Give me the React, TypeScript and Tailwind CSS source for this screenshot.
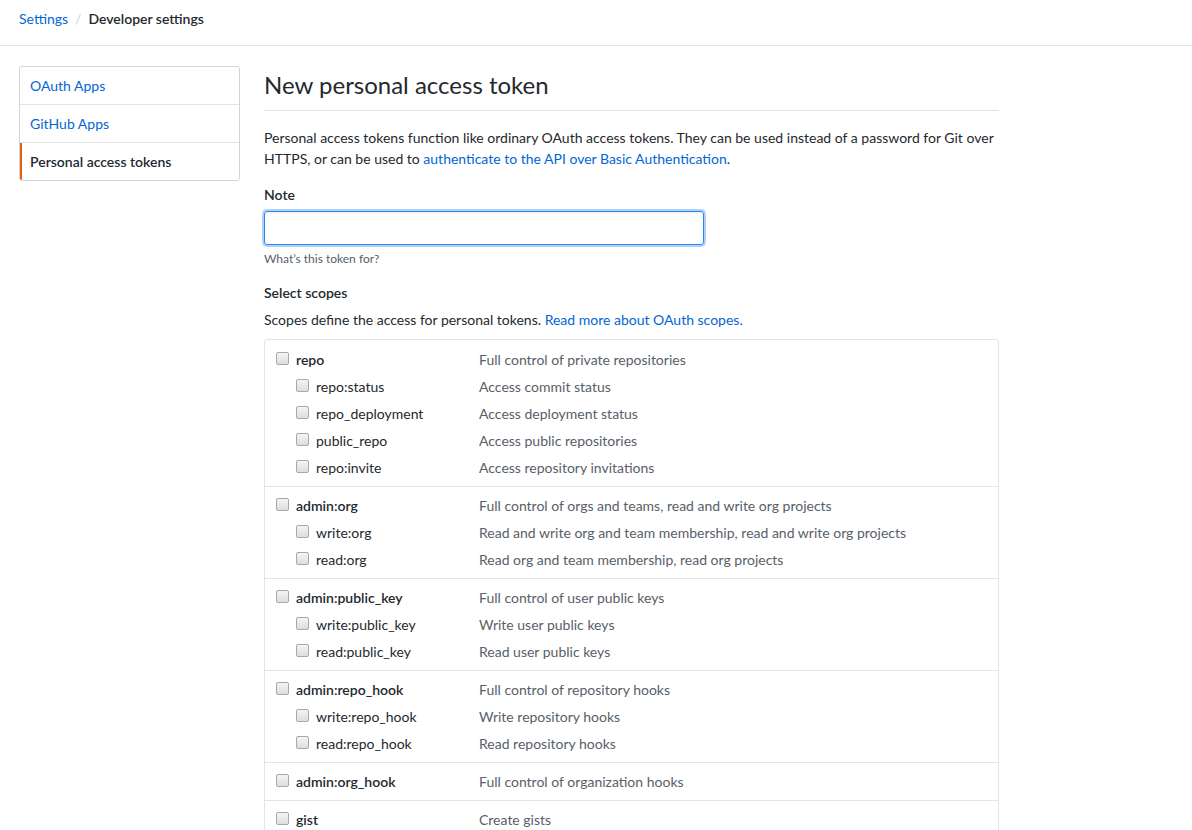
import React from "react";

const font = { fontFamily: '"Segoe UI", Lato, "Liberation Sans", sans-serif' };

function Box() {
  return (
    <span className="mt-[-3px] inline-block h-[13px] w-[13px] shrink-0 rounded-[2px] border border-[#a8a8a8] bg-gradient-to-b from-[#f4f4f4] to-[#dedede]" />
  );
}

type Scope = { name: string; desc: string; subs?: { name: string; desc: string }[] };

const scopes: Scope[] = [
  {
    name: "repo",
    desc: "Full control of private repositories",
    subs: [
      { name: "repo:status", desc: "Access commit status" },
      { name: "repo_deployment", desc: "Access deployment status" },
      { name: "public_repo", desc: "Access public repositories" },
      { name: "repo:invite", desc: "Access repository invitations" },
    ],
  },
  {
    name: "admin:org",
    desc: "Full control of orgs and teams, read and write org projects",
    subs: [
      { name: "write:org", desc: "Read and write org and team membership, read and write org projects" },
      { name: "read:org", desc: "Read org and team membership, read org projects" },
    ],
  },
  {
    name: "admin:public_key",
    desc: "Full control of user public keys",
    subs: [
      { name: "write:public_key", desc: "Write user public keys" },
      { name: "read:public_key", desc: "Read user public keys" },
    ],
  },
  {
    name: "admin:repo_hook",
    desc: "Full control of repository hooks",
    subs: [
      { name: "write:repo_hook", desc: "Write repository hooks" },
      { name: "read:repo_hook", desc: "Read repository hooks" },
    ],
  },
  { name: "admin:org_hook", desc: "Full control of organization hooks" },
  { name: "gist", desc: "Create gists" },
  { name: "notifications", desc: "Access notifications" },
];

function Row({ name, desc, sub }: { name: string; desc: string; sub?: boolean }) {
  return (
    <div className="flex h-[27px] items-center text-[14px]">
      <div className={`flex w-[214px] shrink-0 items-center ${sub ? "pl-[31px]" : "pl-[11px]"}`}>
        <Box />
        <span className={`ml-[7px] ${sub ? "text-[#24292e]" : "font-semibold text-[#24292e]"}`}>{name}</span>
      </div>
      <span className="text-[#586069]">{desc}</span>
    </div>
  );
}

export default function App() {
  return (
    <div className="h-[830px] overflow-hidden bg-white text-[14px] text-[#24292e]" style={font}>
      <div className="flex h-[46px] items-center border-b border-[#e1e4e8] pl-[19px] pb-[9px]">
        <span className="text-[#0366d6]">Settings</span>
        <span className="mx-[7px] text-[#d1d5da]">/</span>
        <span className="font-semibold">Developer settings</span>
      </div>
      <div className="flex pt-[20px]">
        <div className="ml-[19px] w-[221px] shrink-0">
          <div className="overflow-hidden rounded-[3px] border border-[#d1d5da]">
            <div className="flex h-[38px] items-center border-b border-[#e1e4e8] pl-[10px] text-[#0366d6]">OAuth Apps</div>
            <div className="flex h-[38px] items-center border-b border-[#e1e4e8] pl-[10px] text-[#0366d6]">GitHub Apps</div>
            <div className="flex h-[37px] items-center border-l-2 border-[#e36209] pl-[8px] font-semibold">Personal access tokens</div>
          </div>
        </div>
        <div className="ml-[24px] w-[735px]">
          <h2 className="flex h-[45px] items-end border-b border-[#e1e4e8] pb-[10px] text-[24px] leading-[30px] font-normal">New personal access token</h2>
          <p className="mt-[16px] leading-[21px]">
            Personal access tokens function like ordinary OAuth access tokens. They can be used instead of a password for Git over
            <br />
            HTTPS, or can be used to <span className="text-[#0366d6]">authenticate to the API over Basic Authentication</span>.
          </p>
          <div className="mt-[15px] font-semibold leading-[21px]">Note</div>
          <input
            className="mt-[6px] block h-[34px] w-[440px] rounded-[3px] border border-[#2188ff] px-2 shadow-[inset_0_1px_2px_rgba(27,31,35,0.075),0_0_0_2px_rgba(3,102,214,0.3)] outline-none"
            type="text"
          />
          <div className="mt-[5px] text-[12px] leading-[17px] text-[#586069]">What’s this token for?</div>
          <div className="mt-[15px] font-semibold leading-[21px]">Select scopes</div>
          <p className="mt-[6px] leading-[21px]">
            Scopes define the access for personal tokens. <span className="text-[#0366d6]">Read more about OAuth scopes.</span>
          </p>
          <div className="mt-[9px] rounded-[3px] border border-[#e1e4e8]">
            {scopes.map((s, i) => (
              <div key={s.name} className={`pb-[5px] ${i > 0 ? "border-t border-[#e1e4e8] pt-[5px]" : "pt-[6px]"}`}>
                <Row name={s.name} desc={s.desc} />
                {s.subs?.map((c) => <Row key={c.name} name={c.name} desc={c.desc} sub />)}
              </div>
            ))}
          </div>
        </div>
      </div>
    </div>
  );
}
